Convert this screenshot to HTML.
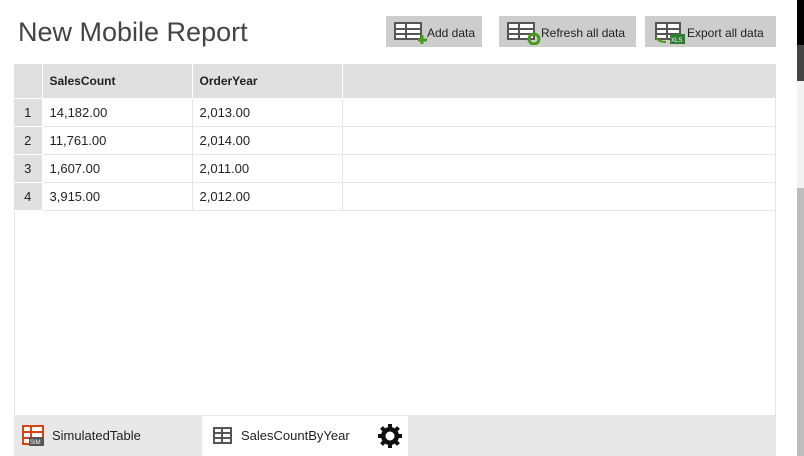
<!DOCTYPE html>
<html><head><style>
*{margin:0;padding:0;box-sizing:border-box}
body{width:804px;height:456px;background:#fff;font-family:"Liberation Sans",sans-serif;position:relative;overflow:hidden;color:#222}
.a{position:absolute}
.btn{position:absolute;top:16px;height:31px;background:#cdcdcd;font-size:12px;line-height:34px;color:#222}
.btn svg{position:absolute;left:8px;top:5px}
td{border-right:1px solid #e6e6e6;border-bottom:1px solid #e6e6e6;height:28px;font-size:13px;padding-left:7px}
</style></head><body>
<div class="a" style="left:18px;top:17px;font-size:27px;color:#444">New Mobile Report</div>
<div class="btn" style="left:386px;width:96px"><svg width="34" height="24"><rect x="1" y="2" width="26" height="16" fill="#fff" stroke="#555" stroke-width="2"/><path d="M1 8h26M1 13h26M12 2v16" stroke="#555" stroke-width="2"/><path d="M28 14v9M24 19h9" stroke="#4a9a1a" stroke-width="3"/></svg><span style="position:absolute;left:41px">Add data</span></div>
<div class="btn" style="left:499px;width:137px"><svg width="34" height="24"><rect x="1" y="2" width="26" height="16" fill="#fff" stroke="#555" stroke-width="2"/><path d="M1 8h26M1 13h26M12 2v16" stroke="#555" stroke-width="2"/><circle cx="27" cy="18" r="5" fill="none" stroke="#4a9a1a" stroke-width="3"/></svg><span style="position:absolute;left:42px">Refresh all data</span></div>
<div class="btn" style="left:645px;width:131px"><svg width="34" height="24"><rect x="3" y="2" width="24" height="16" fill="#fff" stroke="#555" stroke-width="2"/><path d="M3 8h24M3 13h24M14 2v16" stroke="#555" stroke-width="2"/><rect x="17" y="13" width="15" height="10" fill="#2e7d32"/><text x="18" y="21" font-size="6" fill="#fff" font-family="Liberation Sans">XLS</text><path d="M3 16q2 5 10 5" stroke="#4a9a1a" stroke-width="2" fill="none"/></svg><span style="position:absolute;left:42px">Export all data</span></div>
<div class="a" style="left:14px;top:64px;width:762px;height:352px;border:1px solid #e6e6e6;border-top:none;background:#fff"></div>
<table class="a" style="left:14px;top:64px;border-collapse:collapse;width:762px">
<tr style="background:#e0e0e0;font-weight:bold"><td style="width:28px;height:34px;border-color:#fff"></td><td style="width:150px;border-color:#fff;font-size:12px">SalesCount</td><td style="width:150px;border-color:#fff;font-size:12px">OrderYear</td><td style="border:none"></td></tr>
<tr><td style="background:#e0e0e0;text-align:center;padding:0;border-color:#fff">1</td><td>14,182.00</td><td>2,013.00</td><td></td></tr>
<tr><td style="background:#e0e0e0;text-align:center;padding:0;border-color:#fff">2</td><td>11,761.00</td><td>2,014.00</td><td></td></tr>
<tr><td style="background:#e0e0e0;text-align:center;padding:0;border-color:#fff">3</td><td>1,607.00</td><td>2,011.00</td><td></td></tr>
<tr><td style="background:#e0e0e0;text-align:center;padding:0;border-color:#fff">4</td><td>3,915.00</td><td>2,012.00</td><td></td></tr>
</table>
<div class="a" style="left:14px;top:416px;width:762px;height:40px;background:#e8e8e8"></div>
<div class="a" style="left:202px;top:416px;width:206px;height:40px;background:#fff"></div>
<svg class="a" style="left:22px;top:425px" width="24" height="22"><rect x="1" y="1" width="20" height="18" fill="#fff" stroke="#d84315" stroke-width="2"/><path d="M1 7h20M1 13h20M9 1v18" stroke="#d84315" stroke-width="2"/><rect x="7" y="12" width="15" height="9" fill="#555"/><text x="8" y="19" font-size="6" fill="#fff">SIM</text></svg>
<div class="a" style="left:52px;top:428px;font-size:13px">SimulatedTable</div>
<svg class="a" style="left:213px;top:427px" width="20" height="18"><rect x="1" y="1" width="17" height="15" fill="none" stroke="#555" stroke-width="2"/><path d="M1 6h17M1 11h17M9 1v15" stroke="#555" stroke-width="2"/></svg>
<div class="a" style="left:241px;top:428px;font-size:13px">SalesCountByYear</div>
<svg class="a" style="left:377px;top:423px" width="26" height="26" viewBox="0 0 26 26"><g fill="#111"><circle cx="13" cy="13" r="9"/><g stroke="#111" stroke-width="4"><path d="M13 1v24M1 13h24M4.5 4.5l17 17M21.5 4.5l-17 17"/></g></g><circle cx="13" cy="13" r="4.5" fill="#fff"/></svg>
<div class="a" style="left:797px;top:0;width:7px;height:456px;background:#bdbdbd"></div>
<div class="a" style="left:797px;top:0;width:7px;height:45px;background:#000"></div>
<div class="a" style="left:797px;top:45px;width:7px;height:36px;background:#444"></div>
<div class="a" style="left:797px;top:81px;width:7px;height:107px;background:#f2f2f2"></div>
</body></html>
